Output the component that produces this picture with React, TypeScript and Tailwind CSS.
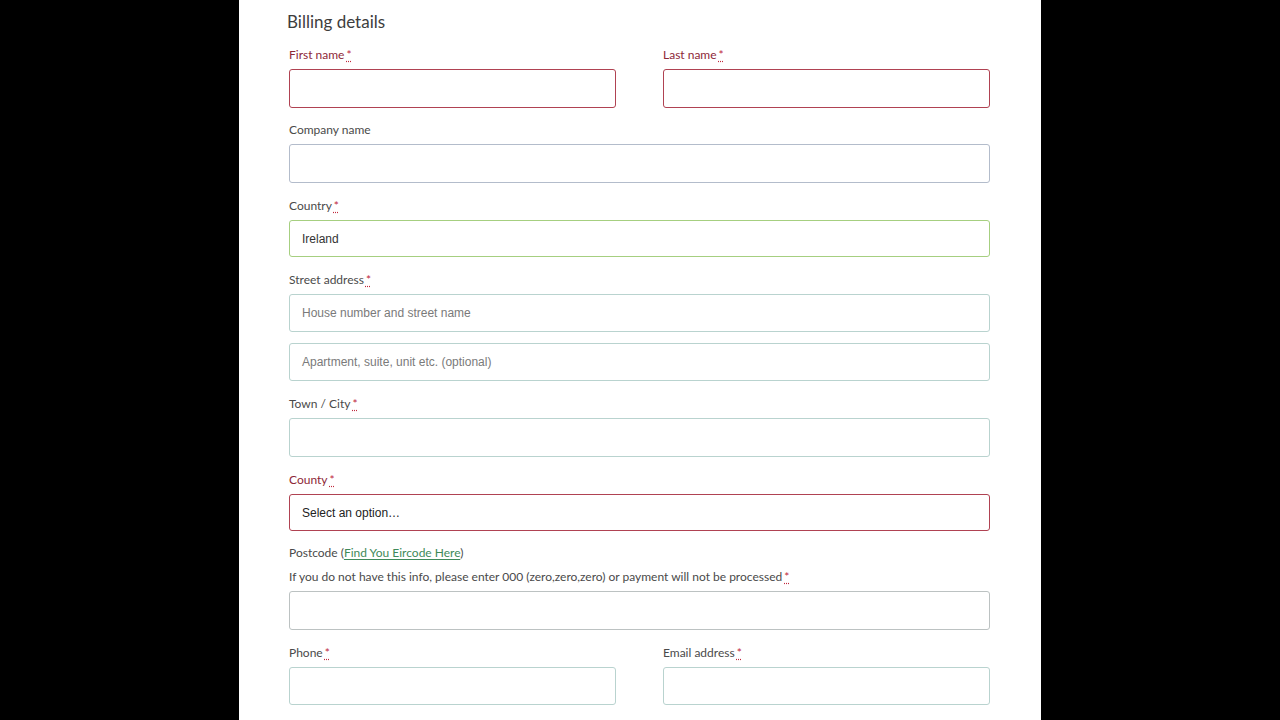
import React from "react";

const lato = { fontFamily: "Lato, 'Noto Sans', sans-serif" };

function Req() {
  return (
    <abbr
      className="ml-[2px] text-[#c0283c]"
      style={{ textDecoration: "underline dotted", textUnderlineOffset: "2px" }}
      title="required"
    >
      *
    </abbr>
  );
}

function Label({ children, red, req = true }: { children: React.ReactNode; red?: boolean; req?: boolean }) {
  return (
    <div className={`h-[18px] leading-[18px] text-[12px] mb-[5px] ${red ? "text-[#8d2738]" : "text-[#4a4a4a]"}`}>
      {children}
      {req && <Req />}
    </div>
  );
}

function Input({ border, placeholder, value, h = "h-[39px]", textColor = "text-[#333]" }: { border: string; placeholder?: string; value?: string; h?: string; textColor?: string }) {
  return (
    <div
      className={`${h} w-full rounded-[3px] border bg-white flex items-center pl-3 text-[12px] ${border} ${textColor}`}
      style={{ fontFamily: "'Liberation Sans', Arial, sans-serif" }}
    >
      {value ? <span>{value}</span> : placeholder ? <span className="text-[#7a7a7a]">{placeholder}</span> : null}
    </div>
  );
}

export default function App() {
  return (
    <div className="min-h-[720px] w-full bg-black flex justify-center" style={lato}>
      <div className="w-[802px] bg-white min-h-[720px] pl-[50px] pr-[51px]">
        <h3 className="text-[17px] text-[#3d3d3d] h-[42px] leading-[44px] -ml-[2px] mb-[4px]">Billing details</h3>

        <div className="grid grid-cols-2 gap-x-[47px]">
          <div className="mb-[13px]">
            <Label red>First name</Label>
            <Input border="border-[#b04252]" />
          </div>
          <div className="mb-[13px]">
            <Label red>Last name</Label>
            <Input border="border-[#b04252]" />
          </div>
        </div>

        <div className="mb-[14px]">
          <Label req={false}>Company name</Label>
          <Input border="border-[#b3bccb]" />
        </div>

        <div className="mb-[14px]">
          <Label>Country</Label>
          <Input border="border-[#a6cf80]" value="Ireland" h="h-[37px]" />
        </div>

        <div className="mb-[14px]">
          <Label>Street address</Label>
          <Input border="border-[#b9d3cf]" h="h-[38px]" placeholder="House number and street name" />
          <div className="h-[11px]" />
          <Input border="border-[#b9d3cf]" h="h-[38px]" placeholder="Apartment, suite, unit etc. (optional)" />
        </div>

        <div className="mb-[14px]">
          <Label>Town / City</Label>
          <Input border="border-[#b9d3cf]" />
        </div>

        <div className="mb-[13px]">
          <Label red>County</Label>
          <Input border="border-[#b04252]" h="h-[37px]" value="Select an option…" textColor="text-[#222]" />
        </div>

        <div className="mb-[14px]">
          <div className="h-[18px] leading-[18px] text-[12px] text-[#4a4a4a]">
            Postcode (
            <span className="text-[#3f8a5a] underline underline-offset-2">Find You Eircode Here</span>)
          </div>
          <div className="h-[18px] leading-[18px] text-[12px] text-[#4a4a4a] mt-[6px] mb-[5px]">
            If you do not have this info, please enter 000 (zero,zero,zero) or payment will not be processed
            <Req />
          </div>
          <Input border="border-[#bcc2c2]" />
        </div>

        <div className="grid grid-cols-2 gap-x-[47px]">
          <div>
            <Label>Phone</Label>
            <Input border="border-[#b9d3cf]" h="h-[38px]" />
          </div>
          <div>
            <Label>Email address</Label>
            <Input border="border-[#b9d3cf]" h="h-[38px]" />
          </div>
        </div>
      </div>
    </div>
  );
}
